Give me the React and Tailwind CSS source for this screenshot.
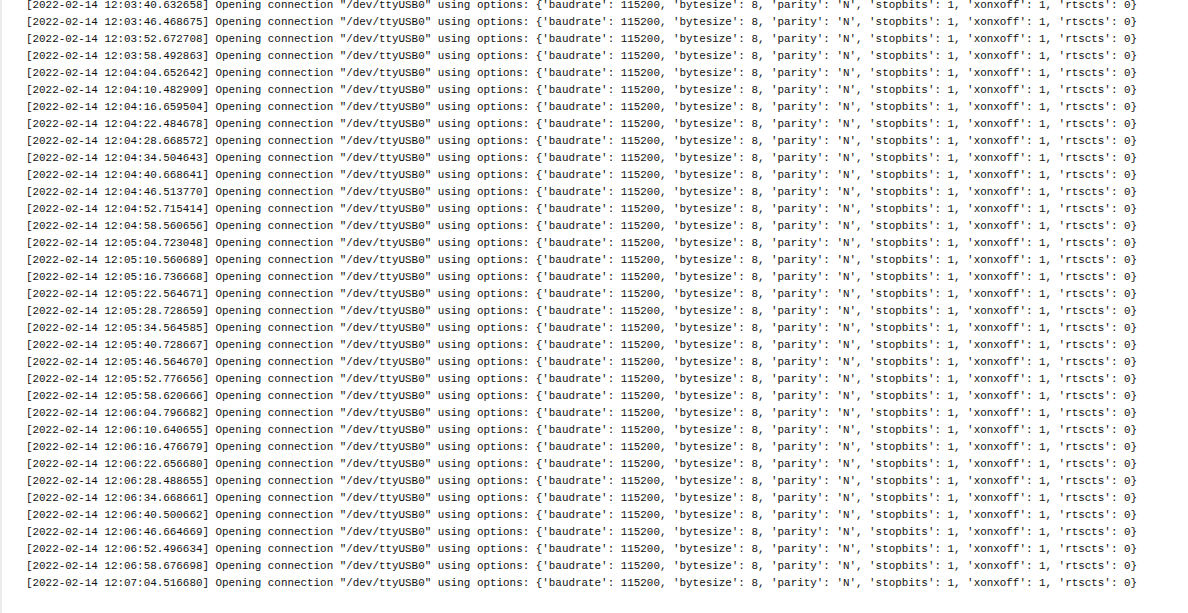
const times = [
  "12:03:40.632658", "12:03:46.468675", "12:03:52.672708", "12:03:58.492863",
  "12:04:04.652642", "12:04:10.482909", "12:04:16.659504", "12:04:22.484678",
  "12:04:28.668572", "12:04:34.504643", "12:04:40.668641", "12:04:46.513770",
  "12:04:52.715414", "12:04:58.560656", "12:05:04.723048", "12:05:10.560689",
  "12:05:16.736668", "12:05:22.564671", "12:05:28.728659", "12:05:34.564585",
  "12:05:40.728667", "12:05:46.564670", "12:05:52.776656", "12:05:58.620666",
  "12:06:04.796682", "12:06:10.640655", "12:06:16.476679", "12:06:22.656680",
  "12:06:28.488655", "12:06:34.668661", "12:06:40.500662", "12:06:46.664669",
  "12:06:52.496634", "12:06:58.676698", "12:07:04.516680",
];

export default function App() {
  return (
    <div className="w-[1188px] h-[613px] overflow-hidden bg-white border-l-2 border-[#ebebeb]">
      <div className="pl-6 -mt-[3px] font-['Liberation_Mono',monospace] text-[10.9px] leading-[17px] text-[#111] whitespace-pre">
        {times.map((t) => (
          <div key={t}>
            {`[2022-02-14 ${t}] Opening connection "/dev/ttyUSB0" using options: {'baudrate': 115200, 'bytesize': 8, 'parity': 'N', 'stopbits': 1, 'xonxoff': 1, 'rtscts': 0}`}
          </div>
        ))}
      </div>
    </div>
  );
}
